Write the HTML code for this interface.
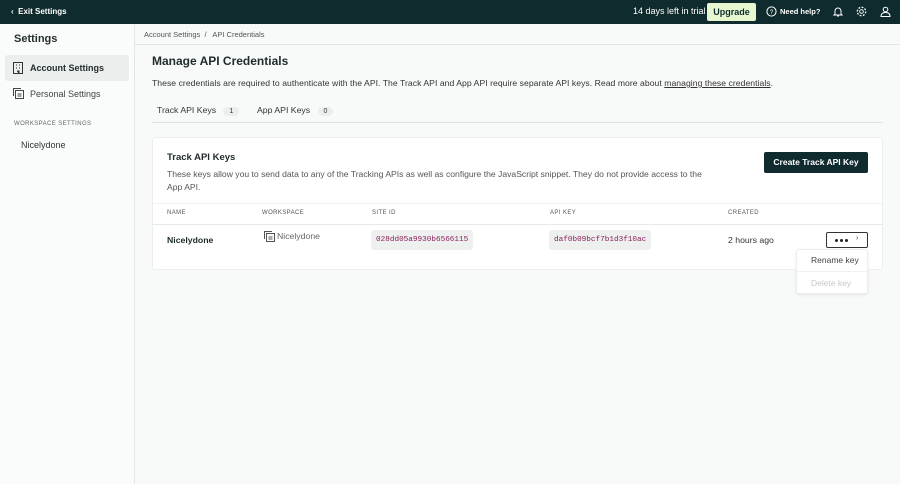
<!DOCTYPE html><html><head><style>
*{box-sizing:border-box;margin:0;padding:0}
body{width:900px;height:484px;overflow:hidden;font-family:"Liberation Sans",sans-serif;background:#f8f9f9;color:#1f2a2c;position:relative}
.top{position:absolute;left:0;top:0;width:900px;height:24px;background:#0f2b2e;color:#fff}
.abs{position:absolute;white-space:nowrap}
.side{position:absolute;left:0;top:24px;width:135px;height:460px;background:#fafbfb;border-right:1px solid #e3e6e6}
.mono{font-family:"Liberation Mono",monospace;font-size:7.7px;color:#8a1f5a;background:#eef0f0;border-radius:3px;padding:6px 5px}
</style></head><body>
<div class="top">
<div class="abs" style="left:11px;top:7px;font-size:8px;font-weight:bold">‹&nbsp; Exit Settings</div>
<div class="abs" style="left:633px;top:6px;font-size:9px">14 days left in trial</div>
<div class="abs" style="left:707px;top:3px;width:49px;height:18px;background:#e6f7cf;border-radius:2px;color:#0f2b2e;font-size:9px;font-weight:bold;text-align:center;line-height:18px">Upgrade</div>
<svg class="abs" style="left:766px;top:6px" width="11" height="11" viewBox="0 0 12 12"><circle cx="6" cy="6" r="5" fill="none" stroke="#fff" stroke-width="1.1"/><text x="6" y="8.5" font-size="7" fill="#fff" text-anchor="middle" font-family="Liberation Sans">?</text></svg>
<div class="abs" style="left:780px;top:7px;font-size:7.5px;font-weight:bold">Need help?</div>
<svg class="abs" style="left:833px;top:6px" width="10" height="11" viewBox="0 0 10 11"><path d="M2 8V5a3 3 0 0 1 6 0v3l1 1H1z M4 10h2" fill="none" stroke="#fff" stroke-width="1"/></svg>
<svg class="abs" style="left:856px;top:6px" width="11" height="11" viewBox="0 0 12 12"><circle cx="6" cy="6" r="2" fill="none" stroke="#fff"/><circle cx="6" cy="6" r="4.6" fill="none" stroke="#fff" stroke-width="1.4" stroke-dasharray="2 1.6"/></svg>
<svg class="abs" style="left:880px;top:6px" width="11" height="11" viewBox="0 0 11 11"><circle cx="5.5" cy="3.5" r="2.3" fill="none" stroke="#fff"/><path d="M1 10.5c0-3 2-4 4.5-4s4.5 1 4.5 4z" fill="none" stroke="#fff"/></svg>
</div>
<div class="side">
<div class="abs" style="left:14px;top:9px;font-size:11px;font-weight:bold;color:#26302f">Settings</div>
<div class="abs" style="left:5px;top:31px;width:124px;height:26px;background:#eceeee;border-radius:3px"></div>
<svg class="abs" style="left:13px;top:38px" width="10" height="12" viewBox="0 0 10 12"><rect x="0.5" y="0.5" width="9" height="11" fill="none" stroke="#333"/><path d="M3 3h1M6 3h1M3 6h1M6 6h1M4 9h2v3" stroke="#333"/></svg>
<div class="abs" style="left:30px;top:39px;font-size:9px;font-weight:bold">Account Settings</div>
<svg class="abs" style="left:13px;top:64px" width="11" height="11" viewBox="0 0 11 11"><path d="M0.5 8V0.5H8" fill="none" stroke="#444"/><rect x="2.5" y="2.5" width="8" height="8" fill="none" stroke="#444"/><path d="M4.5 6h4M4.5 8h4" stroke="#444"/></svg>
<div class="abs" style="left:30px;top:65px;font-size:9px;color:#444">Personal Settings</div>
<div class="abs" style="left:14px;top:97px;font-size:6px;color:#666;letter-spacing:.4px">WORKSPACE SETTINGS</div>
<div class="abs" style="left:21px;top:116px;font-size:9px;color:#333">Nicelydone</div>
</div>
<div class="abs" style="left:135px;top:44px;width:765px;height:1px;background:#e3e6e6"></div>
<div class="abs" style="left:144px;top:30px;font-size:7.5px;color:#555">Account Settings &nbsp;/ &nbsp; API Credentials</div>
<div class="abs" style="left:152px;top:54px;font-size:12px;font-weight:bold;color:#1f2a2c">Manage API Credentials</div>
<div class="abs" style="left:152px;top:78px;font-size:8.6px;letter-spacing:.05px;color:#333">These credentials are required to authenticate with the API. The Track API and App API require separate API keys. Read more about <u>managing these credentials</u>.</div>
<div class="abs" style="left:157px;top:105px;font-size:8.7px;color:#333">Track API Keys <span style="display:inline-block;margin-left:5px;background:#eceeee;border-radius:6px;padding:1px 6px;font-size:7px">1</span></div>
<div class="abs" style="left:257px;top:105px;font-size:8.7px;color:#333">App API Keys <span style="display:inline-block;margin-left:5px;background:#eceeee;border-radius:6px;padding:1px 6px;font-size:7px">0</span></div>
<div class="abs" style="left:152px;top:122px;width:731px;height:1px;background:#dfe2e2"></div>
<div class="abs" style="left:152px;top:137px;width:731px;height:133px;background:#fff;border:1px solid #eceeee;border-radius:3px"></div>
<div class="abs" style="left:167px;top:152px;font-size:9.5px;font-weight:bold">Track API Keys</div>
<div class="abs" style="left:167px;top:168px;font-size:8.6px;color:#555;line-height:13px;white-space:normal;width:545px">These keys allow you to send data to any of the Tracking APIs as well as configure the JavaScript snippet. They do not provide access to the App API.</div>
<div class="abs" style="left:764px;top:152px;width:104px;height:21px;background:#0f2b2e;color:#fff;font-size:8.5px;font-weight:bold;text-align:center;line-height:21px;border-radius:2px">Create Track API Key</div>
<div class="abs" style="left:153px;top:203px;width:729px;height:1px;background:#f0f2f2"></div>
<div class="abs" style="left:153px;top:224px;width:729px;height:1px;background:#e6e9e9"></div>
<div class="abs" style="top:210px;left:167px;font-size:6px;color:#555;letter-spacing:.4px">NAME</div>
<div class="abs" style="top:210px;left:262px;font-size:6px;color:#555;letter-spacing:.4px">WORKSPACE</div>
<div class="abs" style="top:210px;left:372px;font-size:6px;color:#555;letter-spacing:.4px">SITE ID</div>
<div class="abs" style="top:210px;left:550px;font-size:6px;color:#555;letter-spacing:.4px">API KEY</div>
<div class="abs" style="top:210px;left:728px;font-size:6px;color:#555;letter-spacing:.4px">CREATED</div>
<div class="abs" style="top:235px;left:167px;font-size:8.7px;font-weight:bold">Nicelydone</div>
<svg class="abs" style="left:264px;top:231px" width="11" height="11" viewBox="0 0 11 11"><path d="M0.5 8V0.5H8" fill="none" stroke="#555"/><rect x="2.5" y="2.5" width="8" height="8" fill="none" stroke="#555"/><path d="M4.5 6h4M4.5 8h4" stroke="#555"/></svg>
<div class="abs" style="top:231px;left:277px;font-size:8.7px;color:#666">Nicelydone</div>
<div class="abs mono" style="left:371px;top:230px">028dd05a9930b6566115</div>
<div class="abs mono" style="left:549px;top:230px">daf0b09bcf7b1d3f10ac</div>
<div class="abs" style="top:235px;left:728px;font-size:8.7px;color:#333">2 hours ago</div>
<div class="abs" style="left:826px;top:232px;width:42px;height:16px;border:1px solid #333;border-radius:2px"></div>
<div class="abs" style="left:835px;top:239px;width:3px;height:3px;border-radius:50%;background:#222"></div>
<div class="abs" style="left:840px;top:239px;width:3px;height:3px;border-radius:50%;background:#222"></div>
<div class="abs" style="left:845px;top:239px;width:3px;height:3px;border-radius:50%;background:#222"></div>
<div class="abs" style="left:856px;top:235px;font-size:7px;color:#333">›</div>
<div class="abs" style="left:796px;top:249px;width:72px;height:45px;background:#fff;border:1px solid #eceeee;border-radius:3px;box-shadow:0 1px 3px rgba(0,0,0,.08)"></div>
<div class="abs" style="left:811px;top:255px;font-size:8.5px;color:#444">Rename key</div>
<div class="abs" style="left:797px;top:271px;width:70px;height:1px;background:#f0f2f2"></div>
<div class="abs" style="left:811px;top:278px;font-size:8.5px;color:#c6c9c9">Delete key</div>
</body></html>
